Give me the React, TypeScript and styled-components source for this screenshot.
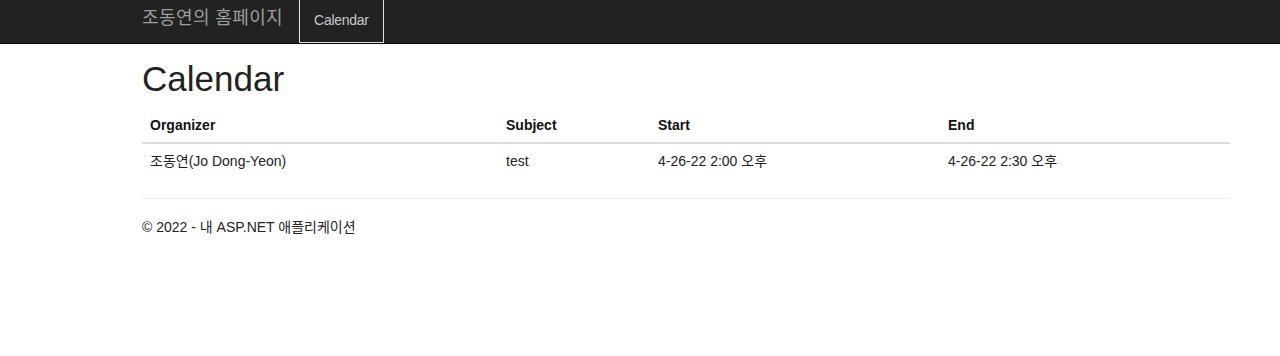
import React from "react"
import styled, { createGlobalStyle } from "styled-components"

const GlobalStyle = createGlobalStyle`
  html, body {
    margin: 0;
    padding: 0;
    background: #fff;
  }
  body {
    font-family: "Liberation Sans", Arial, "Noto Sans CJK KR", sans-serif;
    font-size: 14px;
    line-height: 1.42857;
    color: #333;
  }
`

const Navbar = styled.nav`
  height: 43px;
  background: #222;
  border-bottom: 1px solid #080808;
`

const Container = styled.div`
  width: 1088px;
  padding: 0 50px 0 142px;
  box-sizing: content-box;
`

const NavInner = styled(Container)`
  display: flex;
  align-items: stretch;
  height: 100%;
`

const Brand = styled.a`
  display: flex;
  align-items: center;
  font-size: 18px;
  color: #9d9d9d;
  text-decoration: none;
  padding-bottom: 5px;
  margin-right: 16px;
  letter-spacing: 0.4px;
`

const NavLink = styled.a<{ $active?: boolean }>`
  display: flex;
  align-items: center;
  padding: 0 14px 1px 14px;
  color: #c8c8c8;
  text-decoration: none;
  border: 1px solid ${(p) => (p.$active ? "#e0e0e0" : "transparent")};
  border-top: none;
  box-sizing: border-box;
  height: 43px;
  letter-spacing: -0.3px;
`

const Title = styled.h1`
  font-size: 35px;
  font-weight: 400;
  line-height: 1.1;
  color: #222;
  margin: 16px 0 8px;
`

const Table = styled.table`
  width: 100%;
  table-layout: fixed;
  border-collapse: collapse;
  margin-bottom: 20px;
`

const Th = styled.th<{ $w: number }>`
  box-sizing: border-box;
  width: ${(p) => p.$w}px;
  text-align: left;
  font-weight: 700;
  padding: 8px 8px 7px;
  line-height: 20px;
  color: #111;
  border-bottom: 2px solid #ddd;
`

const Td = styled.td`
  padding: 7px 8px;
  line-height: 20px;
  color: #222;
`

const Rule = styled.hr`
  border: 0;
  border-top: 1px solid #eee;
  margin: 0 0 18px;
`

const Footer = styled.footer`
  color: #222;
  line-height: 20px;
`

const rows = [
  {
    organizer: "조동연(Jo Dong-Yeon)",
    subject: "test",
    start: "4-26-22 2:00 오후",
    end: "4-26-22 2:30 오후",
  },
]

export default function App() {
  return (
    <>
      <GlobalStyle />
      <Navbar>
        <NavInner>
          <Brand href="#">조동연의 홈페이지</Brand>
          <NavLink href="#" $active>
            Calendar
          </NavLink>
        </NavInner>
      </Navbar>
      <Container>
        <Title>Calendar</Title>
        <Table>
          <thead>
            <tr>
              <Th $w={356}>Organizer</Th>
              <Th $w={152}>Subject</Th>
              <Th $w={290}>Start</Th>
              <Th $w={290}>End</Th>
            </tr>
          </thead>
          <tbody>
            {rows.map((r, i) => (
              <tr key={i}>
                <Td>{r.organizer}</Td>
                <Td>{r.subject}</Td>
                <Td>{r.start}</Td>
                <Td>{r.end}</Td>
              </tr>
            ))}
          </tbody>
        </Table>
        <Rule />
        <Footer>© 2022 - 내 ASP.NET 애플리케이션</Footer>
      </Container>
    </>
  )
}
